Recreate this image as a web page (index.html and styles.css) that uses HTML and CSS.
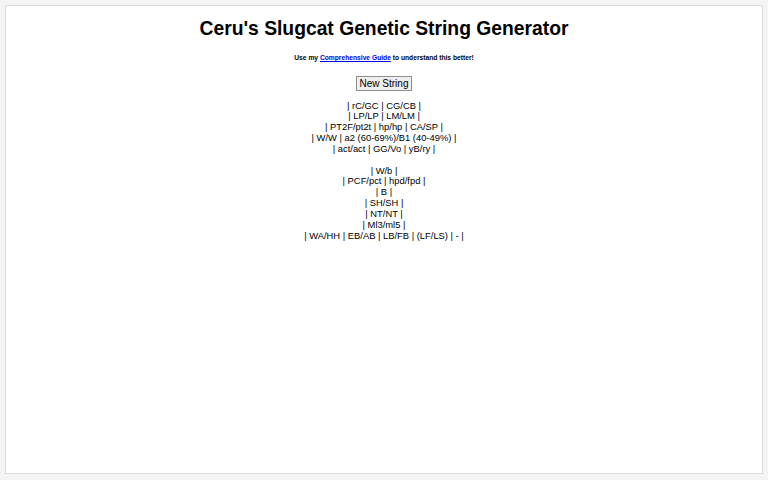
FILE: index.html
```html
<!DOCTYPE html>
<html>
<head>
<meta charset="utf-8">
<link rel="stylesheet" href="styles.css">
</head>
<body>
<div class="page">
  <h1 class="title">Ceru's Slugcat Genetic String Generator</h1>
  <p class="note">Use my <a href="#">Comprehensive Guide</a> to understand this better!</p>
  <div class="actions"><button class="btn">New String</button></div>
  <div class="genes">
    <div>| rC/GC | CG/CB |</div>
    <div>| LP/LP | LM/LM |</div>
    <div>| PT2F/pt2t | hp/hp | CA/SP |</div>
    <div>| W/W | a2 (60-69%)/B1 (40-49%) |</div>
    <div>| act/act | GG/Vo | yB/ry |</div>
    <div class="blank">&nbsp;</div>
    <div>| W/b |</div>
    <div>| PCF/pct | hpd/fpd |</div>
    <div>| B |</div>
    <div>| SH/SH |</div>
    <div>| NT/NT |</div>
    <div>| Ml3/ml5 |</div>
    <div>| WA/HH | EB/AB | LB/FB | (LF/LS) | - |</div>
  </div>
</div>
</body>
</html>
```
FILE: styles.css
```css
html, body {
  margin: 0;
  padding: 0;
  height: 100%;
}
body {
  background: #f4f4f4;
  padding: 5px 5px 6px 5px;
  box-sizing: border-box;
  font-family: "Liberation Sans", Arial, sans-serif;
  color: #000;
}
.page {
  background: #fff;
  border: 1px solid #dcdcdc;
  height: 100%;
  box-sizing: border-box;
  text-align: center;
  padding-top: 13px;
}
.title {
  font-size: 19.3px;
  font-weight: bold;
  margin: 0;
  line-height: 20px;
}
.note {
  font-size: 6.7px;
  font-weight: bold;
  margin: 15px 0 0 0;
  line-height: 8px;
}
.note a {
  color: #0000ee;
}
.actions {
  margin-top: 11px;
}
.btn {
  font-family: "Liberation Sans", Arial, sans-serif;
  font-size: 10px;
  background: #efefef;
  border: 1px solid #8f8f8f;
  padding: 1px 3px;
  height: 15px;
  line-height: 11px;
  color: #000;
  border-radius: 0;
}
.genes {
  margin-top: 9.5px;
  font-size: 9.4px;
  line-height: 10.85px;
}
```
